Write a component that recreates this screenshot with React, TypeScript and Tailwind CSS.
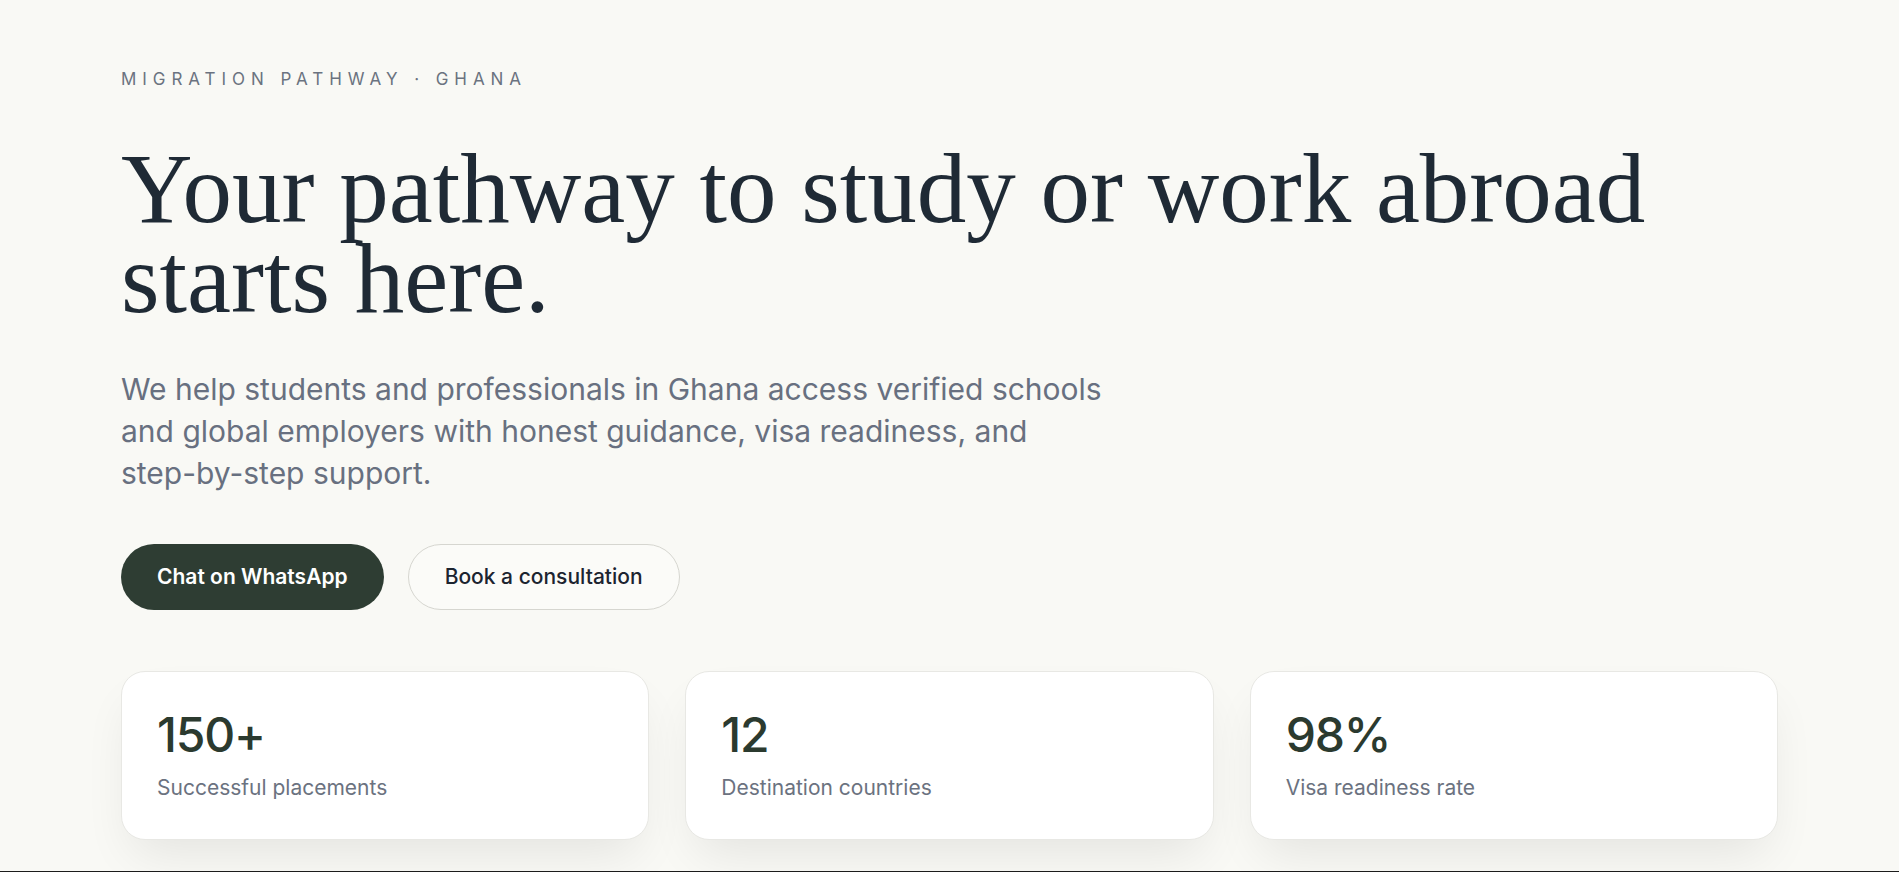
import React from 'react';

const stats = [
  { value: '150+', label: 'Successful placements' },
  { value: '12', label: 'Destination countries' },
  { value: '98%', label: 'Visa readiness rate' },
];

const sans = { fontFamily: 'Inter, "Noto Sans", sans-serif' };

export default function App() {
  return (
    <div className="min-h-screen bg-[#f9f9f5]" style={sans}>
      <section className="px-[121px] pt-[67px] pb-[31px]">
        <p className="text-[17px] leading-6 tracking-[0.35em] uppercase text-[#6b7380]">
          Migration Pathway · Ghana
        </p>

        <h1 className="mt-[53px] font-['Liberation_Serif',serif] text-[99px] leading-[90px] text-[#1f2a35]">
          Your pathway to study or work abroad
          <br />
          starts here.
        </h1>

        <p className="mt-[44px] max-w-[1000px] text-[30px] leading-[42px] text-[#687080]">
          We help students and professionals in Ghana access verified schools and global employers with honest guidance,
          visa readiness, and <span className="whitespace-nowrap">step-by-step</span> support.
        </p>

        <div className="mt-[50px] flex items-center gap-6">
          <button className="h-[66px] px-9 rounded-full bg-[#2e3d33] text-white text-[21px] font-semibold">
            Chat on WhatsApp
          </button>
          <button className="h-[66px] px-9 rounded-full border border-[#d6d6d0] bg-[#fbfbf8] text-[#1c2430] text-[21px] font-medium">
            Book a consultation
          </button>
        </div>

        <div className="mt-[61px] grid grid-cols-3 gap-9">
          {stats.map(s => (
            <div
              key={s.label}
              className="rounded-3xl border border-[#e8e8e4] bg-white px-[35px] pt-[39px] pb-[37px] shadow-[0_24px_50px_-12px_rgba(0,0,0,0.09)]"
            >
              <div className="text-[48px] leading-[48px] font-medium tracking-tight text-[#2b3a2f]">{s.value}</div>
              <div className="mt-[15px] text-[21px] leading-7 text-[#6b7280]">{s.label}</div>
            </div>
          ))}
        </div>
      </section>
      <div className="h-[200px] bg-[#1c1c1c]" />
    </div>
  );
}
